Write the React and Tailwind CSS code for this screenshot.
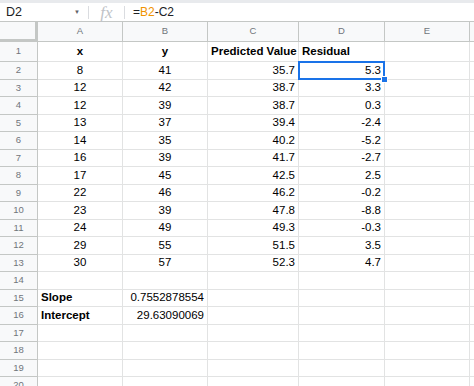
import React from "react";

const rows = [
  ["8", "41", "35.7", "5.3"],
  ["12", "42", "38.7", "3.3"],
  ["12", "39", "38.7", "0.3"],
  ["13", "37", "39.4", "-2.4"],
  ["14", "35", "40.2", "-5.2"],
  ["16", "39", "41.7", "-2.7"],
  ["17", "45", "42.5", "2.5"],
  ["22", "46", "46.2", "-0.2"],
  ["23", "39", "47.8", "-8.8"],
  ["24", "49", "49.3", "-0.3"],
  ["29", "55", "51.5", "3.5"],
  ["30", "57", "52.3", "4.7"],
];

const cell = "border-r border-b border-[#e2e3e3] px-[3px] flex items-center whitespace-nowrap text-[11.5px]";
const rowHead = "bg-[#f8f9fa] border-r border-b border-[#c4c7c5] flex items-center justify-center text-[9.5px] text-[#70757a]";
const colHead = "bg-[#f8f9fa] border-r border-b border-[#c4c7c5] flex items-center justify-center text-[9.5px] text-[#70757a]";

function heightFor(i) {
  return i % 2 === 0 ? "h-[18px]" : "h-[17px]";
}

export default function App() {
  const allRows = [];
  allRows.push({
    n: 1,
    h: "h-[20px]",
    cells: [
      { t: "x", a: "justify-center", b: true },
      { t: "y", a: "justify-center", b: true },
      { t: "Predicted Value", a: "justify-start", b: true },
      { t: "Residual", a: "justify-start", b: true },
      { t: "" },
      { t: "" },
    ],
  });
  rows.forEach((r, i) => {
    allRows.push({
      n: i + 2,
      h: heightFor(i),
      cells: [
        { t: r[0], a: "justify-center" },
        { t: r[1], a: "justify-center" },
        { t: r[2], a: "justify-end" },
        { t: r[3], a: "justify-end", sel: i === 0 },
        { t: "" },
        { t: "" },
      ],
    });
  });
  allRows.push({ n: 14, h: heightFor(12), cells: [{}, {}, {}, {}, {}, {}] });
  allRows.push({
    n: 15,
    h: heightFor(13),
    cells: [
      { t: "Slope", a: "justify-start", b: true },
      { t: "0.7552878554", a: "justify-end" },
      {}, {}, {}, {},
    ],
  });
  allRows.push({
    n: 16,
    h: heightFor(14),
    cells: [
      { t: "Intercept", a: "justify-start", b: true },
      { t: "29.63090069", a: "justify-end" },
      {}, {}, {}, {},
    ],
  });
  [17, 18, 19, 20, 21].forEach((n, k) => {
    allRows.push({ n, h: heightFor(15 + k), cells: [{}, {}, {}, {}, {}, {}] });
  });

  return (
    <div
      className="w-[474px] h-[386px] overflow-hidden bg-white text-black"
      style={{ fontFamily: '"Liberation Sans", Arial, sans-serif' }}
    >
      <div className="h-[3px] bg-[#e8eaed]" />
      <div className="h-[19px] flex items-center border-b border-[#c4c7c5]">
        <div className="w-[88px] flex items-center justify-between pl-[6px] pr-[8px]">
          <span className="text-[12.5px] text-[#202124]">D2</span>
          <span className="text-[6px] text-[#5f6368]">▼</span>
        </div>
        <div className="w-px h-[13px] bg-[#dadce0]" />
        <div className="w-[35px] flex items-center justify-center">
          <span
            className="italic text-[17px] leading-none text-[#c0c3c7]"
            style={{ fontFamily: '"Liberation Serif", "Times New Roman", serif' }}
          >
            fx
          </span>
        </div>
        <div className="w-px h-[13px] bg-[#dadce0]" />
        <div className="pl-[8px] text-[12px] text-[#202124]">
          =<span className="text-[#f09300]">B2</span>-C2
        </div>
      </div>
      <div className="grid grid-cols-[38px_85px_85px_91px_86px_85px_1fr]">
        <div className="h-[20px] bg-[#f8f9fa] border-r-[3px] border-b-[3px] border-[#c4c7c5]" />
        {["A", "B", "C", "D", "E", ""].map((c, i) => (
          <div
            key={i}
            className={`${colHead} h-[20px] ${c === "D" ? "bg-[#e8eaed]" : ""}`}
          >
            {c}
          </div>
        ))}
        {allRows.map((r) => (
          <React.Fragment key={r.n}>
            <div className={`${rowHead} ${r.h} ${r.n === 2 ? "bg-[#e8eaed]" : ""}`}>{r.n}</div>
            {r.cells.map((c, j) => (
              <div
                key={j}
                className={`${cell} ${r.h} ${c.a || ""} ${c.b ? "font-bold" : ""} ${c.sel ? "relative" : ""}`}
              >
                {c.t}
                {c.sel && (
                  <>
                    <div className="absolute inset-[-1px] border-2 border-[#1a73e8] pointer-events-none" />
                    <div className="absolute right-[-4px] bottom-[-4px] w-[7px] h-[7px] bg-[#1a73e8] border border-white" />
                  </>
                )}
              </div>
            ))}
          </React.Fragment>
        ))}
      </div>
    </div>
  );
}
